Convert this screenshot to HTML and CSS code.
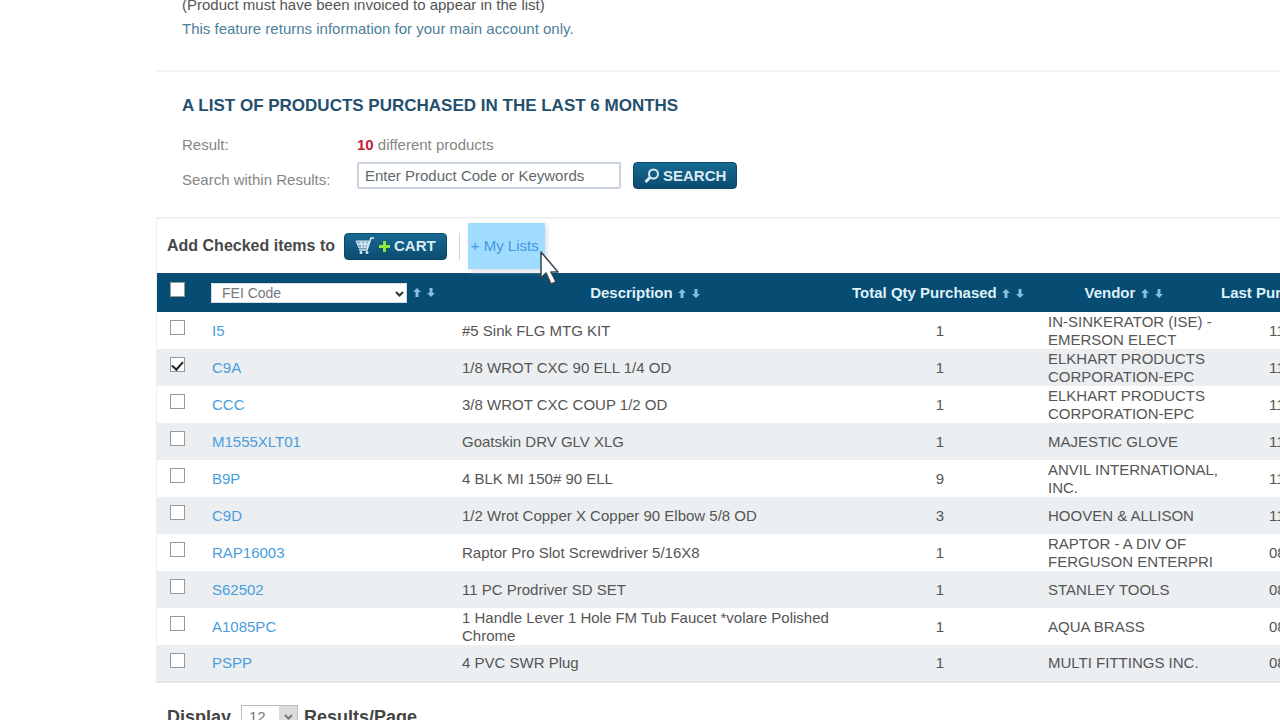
FILE: index.html
```html
<!DOCTYPE html>
<html lang="en">
<head>
<meta charset="utf-8">
<title>Purchased Products</title>
<link rel="stylesheet" href="styles.css">
</head>
<body>
<main class="page">
  <section class="notes">
    <p>(Product must have been invoiced to appear in the list)</p>
    <p class="notice">This feature returns information for your main account only.</p>
  </section>

  <form class="search">
    <h1 class="title">A LIST OF PRODUCTS PURCHASED IN THE LAST 6 MONTHS</h1>
    <div class="row">
      <span class="label">Result:</span>
      <span><strong class="count">10</strong> different products</span>
    </div>
    <div class="row">
      <label class="label search-label" for="keywords">Search within Results:</label>
      <input class="keywords" id="keywords" type="text" value="Enter Product Code or Keywords">
      <button class="button" type="button">
        <svg width="16" height="16" viewBox="0 0 16 16" fill="none" stroke="currentColor"><circle cx="9.500" cy="6" r="4.500" stroke-width="2"/><path d="M6 9.500 1.500 14" stroke-width="3"/></svg>
        SEARCH
      </button>
    </div>
  </form>

  <section class="results">
    <div class="toolbar">
      <span class="toolbar-text">Add Checked items to</span>
      <button class="button cart" type="button">
        <svg width="20" height="18" viewBox="0 0 20 18" fill="none" stroke="currentColor"><path d="M1 4h13l-2 7H4z" fill="currentColor" fill-opacity=".55"/><path d="M19 1h-3l-4 12H4M3 7h11M6 4l1 7m3-7v7" stroke-width="1.500"/><circle cx="6" cy="15.500" r="1.500" fill="currentColor" stroke="none"/><circle cx="12" cy="15.500" r="1.500" fill="currentColor" stroke="none"/></svg>
        <svg class="plus" width="11" height="11" viewBox="0 0 11 11" stroke="currentColor" stroke-width="3"><path d="M5.500 0v11M0 5.500h11"/></svg>
        CART
      </button>
      <span class="divider"></span>
      <span class="lists">
        <a class="lists-link" href="#">+ My Lists</a>
        <svg class="pointer" width="22" height="36" viewBox="0 0 22 36"><path d="M2 2v26l5-5 5 11 5-2-5-10h7z" fill="#fff" stroke="#35454f" stroke-width="1.500" stroke-linejoin="round"/></svg>
      </span>
    </div>
    <table class="products">
      <colgroup><col class="col-check"><col class="col-code"><col><col class="col-qty"><col class="col-vendor"><col class="col-last"></colgroup>
      <thead>
        <tr>
          <th class="check"><input class="box" type="checkbox" aria-label="Select all products"></th>
          <th class="code">
            <span class="code-head">
              <span class="picker"><select class="code-select" aria-label="Product code type"><option>FEI Code</option></select><svg class="caret" width="9" height="6" viewBox="0 0 9 6" fill="none" stroke="#333" stroke-width="2"><path d="m1 1 3.500 3.500L8 1"/></svg></span>
              <svg class="sort" width="22" height="9" viewBox="0 0 22 9"><path d="M4 0l4 4H5.500v5h-3V4H0zM18 9l-4-4h2.500V0h3v5H22z"/></svg>
            </span>
          </th>
          <th>Description <svg class="sort" width="22" height="9" viewBox="0 0 22 9"><path d="M4 0l4 4H5.500v5h-3V4H0zM18 9l-4-4h2.500V0h3v5H22z"/></svg></th>
          <th>Total Qty Purchased <svg class="sort" width="22" height="9" viewBox="0 0 22 9"><path d="M4 0l4 4H5.500v5h-3V4H0zM18 9l-4-4h2.500V0h3v5H22z"/></svg></th>
          <th class="vendor-head">Vendor <svg class="sort" width="22" height="9" viewBox="0 0 22 9"><path d="M4 0l4 4H5.500v5h-3V4H0zM18 9l-4-4h2.500V0h3v5H22z"/></svg></th>
          <th class="last-head">Last Purchased</th>
        </tr>
      </thead>
      <tbody>
        <tr><td class="check"><input class="box" type="checkbox" aria-label="Select I5"></td><td class="code"><a href="#">I5</a></td><td>#5 Sink FLG MTG KIT</td><td class="qty">1</td><td>IN-SINKERATOR (ISE) - EMERSON ELECT</td><td class="last">11</td></tr>
        <tr><td class="check"><input class="box" type="checkbox" aria-label="Select C9A" checked></td><td class="code"><a href="#">C9A</a></td><td>1/8 WROT CXC 90 ELL 1/4 OD</td><td class="qty">1</td><td>ELKHART PRODUCTS CORPORATION-EPC</td><td class="last">11</td></tr>
        <tr><td class="check"><input class="box" type="checkbox" aria-label="Select CCC"></td><td class="code"><a href="#">CCC</a></td><td>3/8 WROT CXC COUP 1/2 OD</td><td class="qty">1</td><td>ELKHART PRODUCTS CORPORATION-EPC</td><td class="last">11</td></tr>
        <tr><td class="check"><input class="box" type="checkbox" aria-label="Select M1555XLT01"></td><td class="code"><a href="#">M1555XLT01</a></td><td>Goatskin DRV GLV XLG</td><td class="qty">1</td><td>MAJESTIC GLOVE</td><td class="last">11</td></tr>
        <tr><td class="check"><input class="box" type="checkbox" aria-label="Select B9P"></td><td class="code"><a href="#">B9P</a></td><td>4 BLK MI 150# 90 ELL</td><td class="qty">9</td><td>ANVIL INTERNATIONAL, INC.</td><td class="last">11</td></tr>
        <tr><td class="check"><input class="box" type="checkbox" aria-label="Select C9D"></td><td class="code"><a href="#">C9D</a></td><td>1/2 Wrot Copper X Copper 90 Elbow 5/8 OD</td><td class="qty">3</td><td>HOOVEN &amp; ALLISON</td><td class="last">11</td></tr>
        <tr><td class="check"><input class="box" type="checkbox" aria-label="Select RAP16003"></td><td class="code"><a href="#">RAP16003</a></td><td>Raptor Pro Slot Screwdriver 5/16X8</td><td class="qty">1</td><td>RAPTOR - A DIV OF FERGUSON ENTERPRI</td><td class="last">08</td></tr>
        <tr><td class="check"><input class="box" type="checkbox" aria-label="Select S62502"></td><td class="code"><a href="#">S62502</a></td><td>11 PC Prodriver SD SET</td><td class="qty">1</td><td>STANLEY TOOLS</td><td class="last">08</td></tr>
        <tr><td class="check"><input class="box" type="checkbox" aria-label="Select A1085PC"></td><td class="code"><a href="#">A1085PC</a></td><td>1 Handle Lever 1 Hole FM Tub Faucet *volare Polished Chrome</td><td class="qty">1</td><td>AQUA BRASS</td><td class="last">08</td></tr>
        <tr><td class="check"><input class="box" type="checkbox" aria-label="Select PSPP"></td><td class="code"><a href="#">PSPP</a></td><td>4 PVC SWR Plug</td><td class="qty">1</td><td>MULTI FITTINGS INC.</td><td class="last">08</td></tr>
      </tbody>
    </table>
  </section>

  <div class="paging">
    <label for="per-page">Display</label>
    <span class="picker per-page"><select class="page-select" id="per-page"><option>12</option></select><span class="page-arrow"><svg width="9" height="6" viewBox="0 0 9 6" fill="none" stroke="#777" stroke-width="2"><path d="m1 1 3.500 3.500L8 1"/></svg></span></span>
    <span>Results/Page</span>
  </div>
</main>
</body>
</html>
```
FILE: styles.css
```css
* { box-sizing: border-box; }
html { height: 100%; overflow: hidden; background: #fff; }
body {
  margin: 0;
  height: 100%;
  overflow: hidden;
  font-family: "Liberation Sans", Arial, sans-serif;
  font-size: 15px;
  line-height: 18px;
  color: #555;
}
svg { display: block; flex: none; }
a { color: #4a9ddd; text-decoration: none; }
input, select, button { font: inherit; margin: 0; }
.page { padding-left: 156px; }

.notes {
  display: flex;
  flex-direction: column;
  gap: 6px;
  margin-top: -4px;
  padding: 0 26px 32px;
  border-bottom: 2px solid #f3f3f3;
}
.notes p { margin: 0; }
.notice { color: #4d7f99; }

.search { padding: 24px 26px 28px; color: #858585; }
.title { margin: 0 0 20px; font-size: 17px; line-height: 20px; color: #24506f; }
.row { display: flex; align-items: center; }
.row + .row { margin-top: 8px; }
.label { width: 175px; }
.search-label { padding-top: 8px; }
.row .count { color: #c3203c; }
.keywords {
  width: 264px;
  height: 27px;
  margin-right: 12px;
  padding: 0 6px;
  border: 2px solid #c9d1dc;
  border-radius: 2px;
  background: #fff;
  color: #5f6a70;
}
.button {
  display: flex;
  align-items: center;
  justify-content: center;
  gap: 3px;
  height: 27px;
  padding: 0 10px;
  border: 1px solid #0b4767;
  border-radius: 4px;
  background: linear-gradient(#176a92, #0b4b70);
  color: #d9eaf3;
  font-weight: bold;
}

.results { border-top: 2px solid #f1f1f1; border-left: 1px solid #eee; }
.toolbar { display: flex; align-items: center; height: 54px; padding-left: 10px; }
.toolbar-text { margin-right: 9px; font-size: 16px; font-weight: bold; color: #484848; }
.cart { gap: 4px; }
.plus { color: #8ee63c; }
.divider { width: 1px; height: 27px; margin: 0 8px 0 12px; background: #ccd6dc; }
.lists { position: relative; }
.lists-link {
  display: flex;
  align-items: center;
  height: 46px;
  padding: 0 6px 0 3px;
  background: #9fdcff;
  box-shadow: 2px 2px 5px #ded9e2;
  color: #4496df;
}
.pointer { position: absolute; left: 71px; top: 27px; }

.products { width: 100%; table-layout: fixed; border-collapse: collapse; border-bottom: 2px solid #e3e6e8; }
.col-check { width: 43px; }
.col-code { width: 250px; }
.col-qty { width: 196px; }
.col-vendor { width: 185px; }
.col-last { width: 59px; }
.products th {
  height: 39px;
  padding: 0;
  background: #064c73;
  color: #dff0f9;
  font-size: 15px;
  white-space: nowrap;
}
.products td { height: 37px; padding: 0 0 0 12px; overflow-wrap: normal; }
.products tbody tr:nth-child(even) { background: #eceff1; }
.products .check { padding: 0 0 6px 13px; text-align: left; vertical-align: middle; }
.products .qty { padding: 0 0 0 4px; text-align: center; }
.products .vendor-head { padding-right: 10px; }
.products .last { padding-left: 48px; overflow: hidden; }
.products .last-head { overflow: hidden; text-align: left; }
.sort { display: inline-block; margin-left: 1px; fill: #84bfe2; }
.box {
  display: grid;
  place-items: center;
  appearance: none;
  width: 15px;
  height: 15px;
  border: 1px solid #999;
  background: #fff;
}
.box:checked::after {
  content: "";
  width: 5px;
  height: 9px;
  border: solid #222;
  border-width: 0 2px 2px 0;
  transform: rotate(42deg);
}
.code-head { display: flex; align-items: center; gap: 5px; padding-left: 11px; }
.picker { position: relative; display: flex; }
.code-select {
  appearance: none;
  width: 196px;
  height: 20px;
  padding: 0 10px;
  border: 1px solid #d5dde2;
  border-radius: 0;
  background: #fff;
  color: #777;
  font-weight: normal;
  font-size: 14px;
}
.caret { position: absolute; right: 3px; top: 8px; }

.paging { display: flex; align-items: center; gap: 6px; padding: 22px 11px; font-size: 18px; font-weight: bold; color: #444; }
.per-page { margin-left: 4px; }
.page-select {
  appearance: none;
  width: 57px;
  height: 24px;
  padding: 0 7px;
  border: 1px solid #bbb;
  border-radius: 0;
  background: #fff;
  color: #777;
  font-size: 15px;
  font-weight: normal;
}
.page-arrow { position: absolute; right: 1px; top: 1px; display: grid; place-items: center; width: 18px; height: 22px; background: #ddd; pointer-events: none; }
```
